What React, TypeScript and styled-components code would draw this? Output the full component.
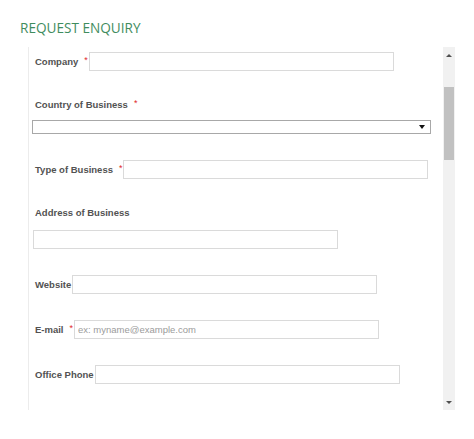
import React from 'react'
import styled, { createGlobalStyle } from 'styled-components'

const GlobalStyle = createGlobalStyle`
  html, body {
    margin: 0;
    padding: 0;
    background: #ffffff;
  }
  body {
    font-family: "Liberation Sans", Arial, sans-serif;
  }
  * {
    box-sizing: border-box;
  }
`

const Page = styled.div`
  width: 474px;
  height: 439px;
  padding-top: 18px;
  overflow: hidden;
`

const Title = styled.h2`
  margin: 0 0 9px 20px;
  font-family: "Open Sans", "Liberation Sans", sans-serif;
  font-size: 13.6px;
  font-weight: 400;
  line-height: 20px;
  color: #3f8c5e;
`

const Panel = styled.div`
  display: flex;
  width: 427px;
  height: 363px;
  margin-left: 28px;
  border-left: 1px solid #ececec;
`

const Content = styled.div`
  flex: 1;
  display: flex;
  flex-direction: column;
  gap: 26px;
  padding: 5px 0 0 4px;
  overflow: hidden;
`

const InlineRow = styled.div<{ $height?: number }>`
  display: flex;
  align-items: center;
  height: ${({ $height = 19 }) => $height}px;
`

const StackedRow = styled.div<{ $spacing: number }>`
  display: flex;
  flex-direction: column;
  align-items: flex-start;
  gap: ${({ $spacing }) => $spacing}px;
`

const Label = styled.label`
  margin-left: 2px;
  margin-bottom: 1px;
  font-size: 9.5px;
  font-weight: 700;
  line-height: 15px;
  color: #525252;
  white-space: nowrap;
`

const Required = styled.span`
  margin-left: 6px;
  margin-bottom: 3px;
  font-size: 9px;
  line-height: 1;
  color: #e0282b;
`

const TextInput = styled.input<{ $gap?: number }>`
  width: 305px;
  height: 19px;
  margin: 0 0 0 ${({ $gap = 1 }) => $gap}px;
  padding: 0 3px;
  border: 1px solid #dadada;
  border-radius: 0;
  background: #ffffff;
  font-family: "Liberation Sans", Arial, sans-serif;
  font-size: 9.5px;
  color: #333333;
  outline: none;

  &::placeholder {
    color: #9b9b9b;
  }
`

const SelectWrap = styled.div`
  position: relative;
  width: 399px;
  height: 14px;
  margin-left: -1px;

  &::after {
    content: '';
    position: absolute;
    right: 6px;
    top: 5px;
    border-left: 3px solid transparent;
    border-right: 3px solid transparent;
    border-top: 4px solid #111111;
    pointer-events: none;
  }
`

const Select = styled.select`
  display: block;
  width: 100%;
  height: 100%;
  margin: 0;
  padding: 0 2px;
  border: 1px solid #a8a8a8;
  border-radius: 0;
  background: #ffffff;
  appearance: none;
  font-family: "Liberation Sans", Arial, sans-serif;
  font-size: 9px;
  outline: none;
`

const Scrollbar = styled.div`
  display: flex;
  flex-direction: column;
  width: 12px;
  height: 100%;
  background: #f1f1f1;
`

const ArrowButton = styled.div<{ $dir: 'up' | 'down' }>`
  display: flex;
  align-items: center;
  justify-content: center;
  height: 16px;
  flex: none;

  &::before {
    content: '';
    border-left: 3px solid transparent;
    border-right: 3px solid transparent;
    ${({ $dir }) =>
      $dir === 'up' ? 'border-bottom: 3px solid #505050;' : 'border-top: 3px solid #505050;'}
  }
`

const Track = styled.div`
  flex: 1;
  display: flex;
  flex-direction: column;
  align-items: center;
`

const Thumb = styled.div<{ $offset: number; $size: number }>`
  width: 10px;
  height: ${({ $size }) => $size}px;
  margin-top: ${({ $offset }) => $offset}px;
  background: #c1c1c1;
`

type FieldProps = {
  label: string
  required?: boolean
  placeholder?: string
  gap?: number
}

const InlineField = ({ label, required, placeholder, gap }: FieldProps) => (
  <InlineRow>
    <Label>{label}</Label>
    {required && <Required>*</Required>}
    <TextInput type="text" placeholder={placeholder} $gap={gap} />
  </InlineRow>
)

export default function App() {
  return (
    <>
      <GlobalStyle />
      <Page>
        <Title>REQUEST ENQUIRY</Title>
        <Panel>
          <Content>
            <InlineField label="Company" required />
            <StackedRow $spacing={8}>
              <InlineRow $height={15}>
                <Label>Country of Business</Label>
                <Required>*</Required>
              </InlineRow>
              <SelectWrap>
                <Select defaultValue="">
                  <option value="" />
                </Select>
              </SelectWrap>
            </StackedRow>
            <InlineField label="Type of Business" required />
            <StackedRow $spacing={9}>
              <Label>Address of Business</Label>
              <TextInput type="text" $gap={0} />
            </StackedRow>
            <InlineField label="Website" />
            <InlineField label="E-mail" required placeholder="ex: myname@example.com" />
            <InlineField label="Office Phone" />
          </Content>
          <Scrollbar>
            <ArrowButton $dir="up" />
            <Track>
              <Thumb $offset={24} $size={73} />
            </Track>
            <ArrowButton $dir="down" />
          </Scrollbar>
        </Panel>
      </Page>
    </>
  )
}
